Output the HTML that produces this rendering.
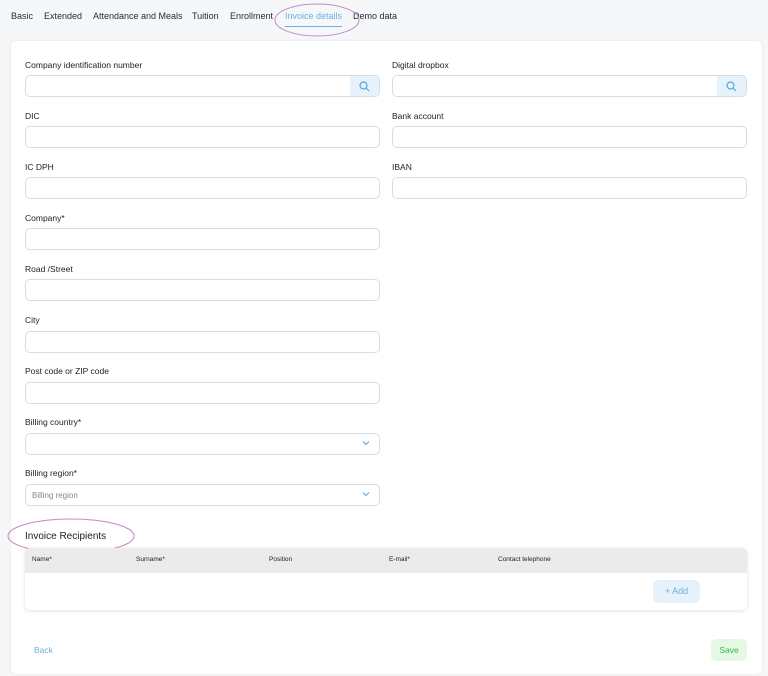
<!DOCTYPE html>
<html><head><style>
*{box-sizing:border-box;margin:0;padding:0}
body{width:768px;height:676px;background:#f5f7f9;font-family:"Liberation Sans",sans-serif;position:relative;overflow:hidden;color:#222}
.tabs{position:absolute;top:11px;left:11px;font-size:9px;color:#1e2a3a}
.tabs span{position:absolute;white-space:nowrap}
.card{position:absolute;left:11px;top:41px;width:751px;height:633px;background:#fff;border-radius:6px;box-shadow:0 0 3px rgba(0,0,0,.08)}
.lbl{position:absolute;font-size:8.5px;color:#222}
.inp{position:absolute;height:22px;width:355px;border:1px solid #d9dde2;border-radius:5px;background:#fff}
.srch{position:absolute;right:0;top:0;width:29px;height:20px;background:#e6f2fb;border-radius:0 4px 4px 0}
.chev{position:absolute;right:9px;top:6px}
.th{position:absolute;font-size:6.5px;color:#222;top:556px}
</style></head><body>
<div class="tabs">
<span style="left:0">Basic</span><span style="left:33px">Extended</span><span style="left:82px">Attendance and Meals</span><span style="left:181px">Tuition</span><span style="left:219px">Enrollment</span><span style="left:274px;color:#6ab0dd">Invoice details</span><span style="left:342px">Demo data</span>
</div>
<div style="position:absolute;left:285px;top:26px;width:57px;height:1px;background:#6ab0dd"></div>
<svg style="position:absolute;left:272px;top:1px" width="90" height="38"><ellipse cx="45" cy="19" rx="42" ry="16" fill="none" stroke="#c48cc0" stroke-width="1"/></svg>
<div class="card"></div>
<div class="lbl" style="left:25px;top:60px">Company identification number</div>
<div class="inp" style="left:25px;top:75px"><div class="srch"><svg style="position:absolute;left:9px;top:5px" width="11" height="11"><circle cx="4.5" cy="4.5" r="3.5" fill="none" stroke="#5aa6d8" stroke-width="1.2"/><line x1="7" y1="7" x2="10" y2="10" stroke="#5aa6d8" stroke-width="1.2"/></svg></div></div>
<div class="lbl" style="left:392px;top:60px">Digital dropbox</div>
<div class="inp" style="left:392px;top:75px"><div class="srch"><svg style="position:absolute;left:9px;top:5px" width="11" height="11"><circle cx="4.5" cy="4.5" r="3.5" fill="none" stroke="#5aa6d8" stroke-width="1.2"/><line x1="7" y1="7" x2="10" y2="10" stroke="#5aa6d8" stroke-width="1.2"/></svg></div></div>
<div class="lbl" style="left:25px;top:111px">DIC</div><div class="inp" style="left:25px;top:126px"></div>
<div class="lbl" style="left:392px;top:111px">Bank account</div><div class="inp" style="left:392px;top:126px"></div>
<div class="lbl" style="left:25px;top:162px">IC DPH</div><div class="inp" style="left:25px;top:177px"></div>
<div class="lbl" style="left:392px;top:162px">IBAN</div><div class="inp" style="left:392px;top:177px"></div>
<div class="lbl" style="left:25px;top:213px">Company*</div><div class="inp" style="left:25px;top:228px"></div>
<div class="lbl" style="left:25px;top:264px">Road /Street</div><div class="inp" style="left:25px;top:279px"></div>
<div class="lbl" style="left:25px;top:315px">City</div><div class="inp" style="left:25px;top:331px"></div>
<div class="lbl" style="left:25px;top:366px">Post code or ZIP code</div><div class="inp" style="left:25px;top:382px"></div>
<div class="lbl" style="left:25px;top:417px">Billing country*</div><div class="inp" style="left:25px;top:433px"><svg class="chev" width="8" height="6"><path d="M1 1.5L4 4.5L7 1.5" fill="none" stroke="#5aa6d8"/></svg></div>
<div class="lbl" style="left:25px;top:468px">Billing region*</div><div class="inp" style="left:25px;top:484px"><span style="position:absolute;left:6px;top:6px;font-size:8px;color:#888">Billing region</span><svg class="chev" width="8" height="6"><path d="M1 1.5L4 4.5L7 1.5" fill="none" stroke="#5aa6d8"/></svg></div>
<div style="position:absolute;left:25px;top:531px;font-size:10px;color:#222">Invoice Recipients</div>
<svg style="position:absolute;left:4px;top:516px" width="134" height="40"><ellipse cx="67" cy="20" rx="63" ry="17" fill="none" stroke="#c48cc0"/></svg>
<div style="position:absolute;left:25px;top:548px;width:722px;height:62px;background:#fff;border-radius:5px;box-shadow:0 1px 4px rgba(0,0,0,.12)"></div>
<div style="position:absolute;left:25px;top:548px;width:722px;height:25px;background:#ebebeb;border-radius:5px 5px 0 0"></div>
<div class="th" style="left:32px">Name*</div><div class="th" style="left:136px">Surname*</div><div class="th" style="left:269px">Position</div><div class="th" style="left:389px">E-mail*</div><div class="th" style="left:498px">Contact telephone</div>
<div style="position:absolute;left:653px;top:580px;width:47px;height:23px;background:#e6f2fb;border-radius:5px;color:#6ab0dd;font-size:9px;text-align:center;line-height:23px">+ Add</div>
<div style="position:absolute;left:34px;top:645px;font-size:8.5px;color:#6ab0dd">Back</div>
<div style="position:absolute;left:711px;top:639px;width:36px;height:22px;background:#e4f8e4;border-radius:5px;color:#3cb54a;font-size:8.5px;text-align:center;line-height:22px">Save</div>
</body></html>
